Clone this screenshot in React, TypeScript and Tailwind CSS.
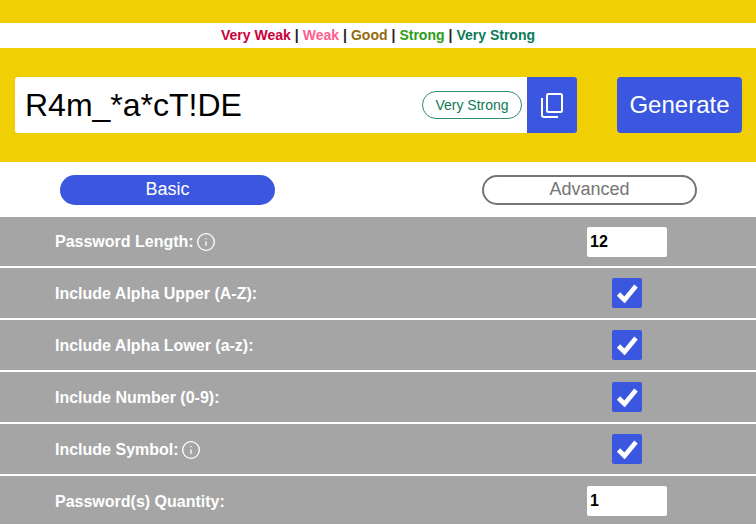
import { Info } from "lucide-react";

const rows = [
  { label: "Password Length:", info: true, value: "12" },
  { label: "Include Alpha Upper (A-Z):" },
  { label: "Include Alpha Lower (a-z):" },
  { label: "Include Number (0-9):" },
  { label: "Include Symbol:", info: true },
  { label: "Password(s) Quantity:", value: "1" },
];

function Row({ label, info, value }: { label: string; info?: boolean; value?: string }) {
  return (
    <div className="flex h-[52px] shrink-0 items-center border-b-2 border-white bg-[#a5a5a5] first:h-[51px]">
      <div className="flex w-[498px] items-center gap-[2px] pl-[55px] pt-[1px] text-[16px] font-bold text-white">
        {label}
        {info && <Info size={20} strokeWidth={1.6} />}
      </div>
      <div className="flex w-[258px] justify-start">
        {value !== undefined ? (
          <div className="ml-[89px] flex h-[30px] w-[80px] items-center rounded-[2px] bg-white pl-[3px] text-[16px] font-bold text-black">
            {value}
          </div>
        ) : (
          <div className="ml-[114px] flex h-[30px] w-[30px] items-center justify-center rounded-[2px] bg-[#3b57e0]">
            <svg width="22" height="20" viewBox="0 0 22 20" fill="none" stroke="white" strokeWidth="4.6">
              <path d="M2.5 11l6 6L20 3" />
            </svg>
          </div>
        )}
      </div>
    </div>
  );
}

export default function App() {
  return (
    <div className="h-[524px] w-[756px] overflow-hidden bg-white font-['Liberation_Sans',Arial,sans-serif]">
      <div className="h-[23px] bg-[#f0d004]" />
      <div className="flex h-[25px] items-center justify-center gap-[4px] text-[14px] font-bold text-[#222]">
        <span className="text-[#c8003c]">Very Weak</span>|
        <span className="text-[#ff5c8d]">Weak</span>|
        <span className="text-[#94690f]">Good</span>|
        <span className="text-[#2b9e16]">Strong</span>|
        <span className="text-[#0d7a55]">Very Strong</span>
      </div>

      <div className="flex h-[114px] bg-[#f0d004] pl-[15px] pt-[29px]">
        <div className="flex h-[56px] w-[512px] items-center justify-between rounded-l-[3px] bg-white pl-[10px] pr-[5px] text-[32px] text-black">
          R4m_*a*cT!DE
          <span className="flex h-[28px] w-[100px] items-center justify-center rounded-full border border-[#2f8f6e] text-[14px] text-[#0d7a55]">
            Very Strong
          </span>
        </div>
        <div className="flex h-[56px] w-[50px] items-center justify-center rounded-r-[3px] bg-[#3b57e0]">
          <svg width="22" height="25" viewBox="0 0 22 25" fill="none" stroke="white" strokeWidth="2">
            <rect x="6" y="1" width="15" height="18" rx="1.5" />
            <path d="M1 5v17a2 2 0 0 0 2 2h14" />
          </svg>
        </div>
        <div className="ml-[40px] flex h-[56px] w-[125px] items-center justify-center rounded-[4px] bg-[#3b57e0] text-[24px] text-white">
          Generate
        </div>
      </div>

      <div className="flex h-[55px] items-center bg-white pl-[60px]">
        <div className="flex h-[30px] w-[215px] items-center justify-center rounded-full bg-[#3b57e0] text-[18px] text-white">
          Basic
        </div>
        <div className="ml-[207px] flex h-[30px] w-[215px] items-center justify-center rounded-full border-2 border-[#757575] text-[18px] text-[#757575]">
          Advanced
        </div>
      </div>

      <div className="flex flex-col">
        {rows.map((row) => (
          <Row key={row.label} {...row} />
        ))}
      </div>
    </div>
  );
}
